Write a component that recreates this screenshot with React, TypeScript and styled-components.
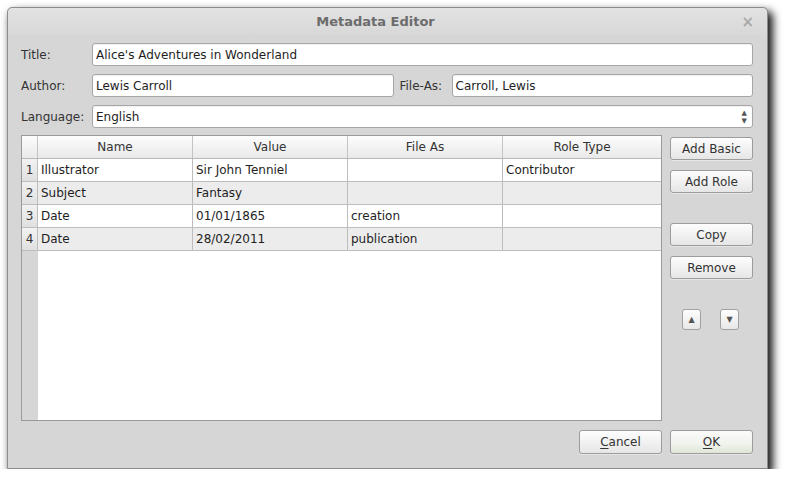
import { FC } from 'react'
import styled, { createGlobalStyle } from 'styled-components'

const GlobalStyle = createGlobalStyle`
  html, body {
    margin: 0;
    padding: 0;
    background: #ffffff;
  }
  body {
    font-family: 'DejaVu Sans', 'Liberation Sans', sans-serif;
    font-size: 12px;
    color: #2e2e2e;
  }
`

type Row = { name: string; value: string; fileAs: string; role: string }

const rows: Row[] = [
  { name: 'Illustrator', value: 'Sir John Tenniel', fileAs: '', role: 'Contributor' },
  { name: 'Subject', value: 'Fantasy', fileAs: '', role: '' },
  { name: 'Date', value: '01/01/1865', fileAs: 'creation', role: '' },
  { name: 'Date', value: '28/02/2011', fileAs: 'publication', role: '' },
]

const columns = ['Name', 'Value', 'File As', 'Role Type']

const App: FC = () => {
  return (
    <>
      <GlobalStyle />
      <StyledWindow>
        <StyledTitleBar>
          <StyledTitle>Metadata Editor</StyledTitle>
          <StyledClose>×</StyledClose>
        </StyledTitleBar>

        <StyledContent>
          <StyledFieldRow>
            <StyledLabel>Title:</StyledLabel>
            <StyledInput>Alice's Adventures in Wonderland</StyledInput>
          </StyledFieldRow>

          <StyledFieldRow>
            <StyledLabel>Author:</StyledLabel>
            <StyledInput>Lewis Carroll</StyledInput>
            <StyledInlineLabel>File-As:</StyledInlineLabel>
            <StyledInput>Carroll, Lewis</StyledInput>
          </StyledFieldRow>

          <StyledFieldRow $last>
            <StyledLabel>Language:</StyledLabel>
            <StyledCombo>
              English
              <StyledSpinArrows>
                <span>▲</span>
                <span>▼</span>
              </StyledSpinArrows>
            </StyledCombo>
          </StyledFieldRow>

          <StyledMiddle>
            <StyledTable>
              <StyledHeaderRow>
                <StyledCorner />
                {columns.map((c) => (
                  <StyledHeaderCell key={c}>{c}</StyledHeaderCell>
                ))}
              </StyledHeaderRow>
              {rows.map((r, i) => (
                <StyledRow key={i} $alt={i % 2 === 1}>
                  <StyledRowNumber>{i + 1}</StyledRowNumber>
                  <StyledCell>{r.name}</StyledCell>
                  <StyledCell>{r.value}</StyledCell>
                  <StyledCell>{r.fileAs}</StyledCell>
                  <StyledCell>{r.role}</StyledCell>
                </StyledRow>
              ))}
              <StyledTableFill>
                <StyledFillGutter />
              </StyledTableFill>
            </StyledTable>

            <StyledSideButtons>
              <StyledButton>Add Basic</StyledButton>
              <StyledButton>Add Role</StyledButton>
              <StyledButton $spaced>Copy</StyledButton>
              <StyledButton>Remove</StyledButton>
              <StyledArrowRow>
                <StyledArrowButton>▲</StyledArrowButton>
                <StyledArrowButton>▼</StyledArrowButton>
              </StyledArrowRow>
            </StyledSideButtons>
          </StyledMiddle>

          <StyledFooter>
            <StyledButton $tall>
              <u>C</u>ancel
            </StyledButton>
            <StyledButton $tall $primary>
              <u>O</u>K
            </StyledButton>
          </StyledFooter>
        </StyledContent>
      </StyledWindow>
    </>
  )
}

export default App

const StyledWindow = styled.div`
  margin: 7px 0 0 7px;
  width: 761px;
  height: 462px;
  box-sizing: border-box;
  border: 1px solid #8c8c8c;
  border-radius: 5px 5px 0 0;
  background: #d6d6d6;
  box-shadow: 4px 5px 8px 1px rgba(0, 0, 0, 0.9);
  display: flex;
  flex-direction: column;
`

const StyledTitleBar = styled.div`
  height: 27px;
  position: relative;
  display: flex;
  align-items: center;
  justify-content: center;
  border-radius: 5px 5px 0 0;
  background: linear-gradient(#e2e2e2, #d8d8d8);
`

const StyledTitle = styled.div`
  font-weight: bold;
  font-size: 13px;
  color: #6c6c6c;
  padding-right: 24px;
`

const StyledClose = styled.div`
  position: absolute;
  right: 13px;
  top: 5px;
  font-size: 15px;
  color: #a9a9a9;
  font-weight: bold;
`

const StyledContent = styled.div`
  flex: 1;
  display: flex;
  flex-direction: column;
  padding: 8px 14px 14px 13px;
`

const StyledFieldRow = styled.div<{ $last?: boolean }>`
  display: flex;
  align-items: center;
  height: 23px;
  margin-bottom: ${(p) => (p.$last ? 7 : 8)}px;
`

const StyledLabel = styled.div`
  width: 71px;
  flex: none;
  color: #333;
`

const StyledInlineLabel = styled.div`
  flex: none;
  width: 58px;
  padding-left: 6px;
  box-sizing: border-box;
  color: #333;
`

const StyledInput = styled.div`
  flex: 1;
  height: 23px;
  box-sizing: border-box;
  border: 1px solid #a6a6a6;
  border-radius: 3px;
  background: #fff;
  box-shadow: inset 0 1px 1px rgba(0, 0, 0, 0.06);
  padding: 0 3px;
  display: flex;
  align-items: center;
  color: #1e1e1e;
`

const StyledCombo = styled(StyledInput)`
  justify-content: space-between;
  padding-right: 5px;
`

const StyledSpinArrows = styled.div`
  display: flex;
  flex-direction: column;
  font-size: 7px;
  line-height: 8px;
  color: #555;
`

const StyledMiddle = styled.div`
  flex: 1;
  display: flex;
  gap: 8px;
`

const StyledTable = styled.div`
  width: 641px;
  height: 286px;
  box-sizing: border-box;
  border: 1px solid #9a9a9a;
  background: #fff;
  display: flex;
  flex-direction: column;
`

const gridColumns = '16px 155px 155px 155px 1fr'

const StyledHeaderRow = styled.div`
  display: grid;
  grid-template-columns: ${gridColumns};
  height: 23px;
  box-sizing: border-box;
  border-bottom: 1px solid #b8b8b8;
  background: linear-gradient(#fdfdfd, #e9e9e9);
`

const StyledCorner = styled.div`
  border-right: 1px solid #c4c4c4;
`

const StyledHeaderCell = styled.div`
  display: flex;
  align-items: center;
  justify-content: center;
  border-right: 1px solid #c4c4c4;
  color: #333;
  &:last-child {
    border-right: none;
  }
`

const StyledRow = styled.div<{ $alt: boolean }>`
  display: grid;
  grid-template-columns: ${gridColumns};
  height: 23px;
  box-sizing: border-box;
  border-bottom: 1px solid #bdbdbd;
  background: ${(p) => (p.$alt ? '#ececec' : '#ffffff')};
`

const StyledRowNumber = styled.div`
  display: flex;
  align-items: center;
  justify-content: center;
  border-right: 1px solid #bdbdbd;
  background: linear-gradient(#f2f2f2, #e0e0e0);
  color: #333;
`

const StyledCell = styled.div`
  display: flex;
  align-items: center;
  padding-left: 3px;
  border-right: 1px solid #bdbdbd;
  color: #1e1e1e;
  &:last-child {
    border-right: none;
  }
`

const StyledTableFill = styled.div`
  flex: 1;
  display: flex;
`

const StyledFillGutter = styled.div`
  width: 16px;
  background: #d6d6d6;
`

const StyledSideButtons = styled.div`
  width: 83px;
  display: flex;
  flex-direction: column;
  gap: 10px;
  padding-top: 2px;
`

const StyledButton = styled.div<{ $spaced?: boolean; $primary?: boolean; $tall?: boolean }>`
  width: 83px;
  height: ${(p) => (p.$tall ? 24 : 23)}px;
  box-sizing: border-box;
  border: 1px solid #9c9c9c;
  border-radius: 3px;
  background: ${(p) =>
    p.$primary
      ? 'linear-gradient(#fbfbfb, #f0f2ec 60%, #dfe6d6)'
      : 'linear-gradient(#fdfdfd, #e6e6e6)'};
  display: flex;
  align-items: center;
  justify-content: center;
  color: #333;
  margin-top: ${(p) => (p.$spaced ? 20 : 0)}px;
  box-shadow: 0 1px 0 rgba(255, 255, 255, 0.4);
  u {
    text-decoration-thickness: 1px;
    text-underline-offset: 2px;
  }
`

const StyledArrowRow = styled.div`
  display: flex;
  justify-content: space-between;
  padding: 0 14px 0 12px;
  margin-top: 20px;
`

const StyledArrowButton = styled.div`
  width: 19px;
  height: 21px;
  box-sizing: border-box;
  border: 1px solid #a0a0a0;
  border-radius: 3px;
  background: linear-gradient(#fdfdfd, #e8e8e8);
  display: flex;
  align-items: center;
  justify-content: center;
  font-size: 8px;
  color: #555;
`

const StyledFooter = styled.div`
  display: flex;
  justify-content: flex-end;
  gap: 8px;
  margin-top: 8px;
`
